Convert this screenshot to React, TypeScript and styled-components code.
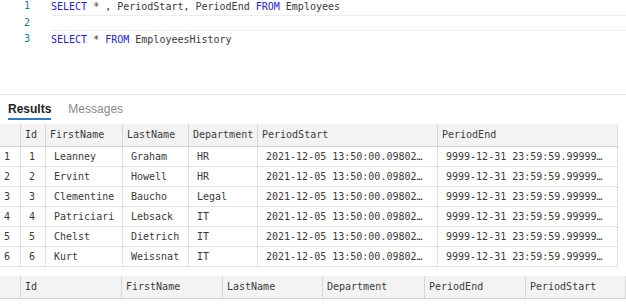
import React from 'react';
import styled, { createGlobalStyle } from 'styled-components';

const GlobalStyle = createGlobalStyle`
  html, body {
    margin: 0;
    padding: 0;
    background: #ffffff;
    overflow: hidden;
  }
`;

const mono = `"DejaVu Sans Mono", "Liberation Mono", monospace`;

type Row = [string, string, string, string, string, string];

const rows: Row[] = [
  ['1', 'Leanney', 'Graham', 'HR', '2021-12-05 13:50:00.09802…', '9999-12-31 23:59:59.99999…'],
  ['2', 'Ervint', 'Howell', 'HR', '2021-12-05 13:50:00.09802…', '9999-12-31 23:59:59.99999…'],
  ['3', 'Clementine', 'Baucho', 'Legal', '2021-12-05 13:50:00.09802…', '9999-12-31 23:59:59.99999…'],
  ['4', 'Patriciari', 'Lebsack', 'IT', '2021-12-05 13:50:00.09802…', '9999-12-31 23:59:59.99999…'],
  ['5', 'Chelst', 'Dietrich', 'IT', '2021-12-05 13:50:00.09802…', '9999-12-31 23:59:59.99999…'],
  ['6', 'Kurt', 'Weissnat', 'IT', '2021-12-05 13:50:00.09802…', '9999-12-31 23:59:59.99999…'],
];

const firstCols = '21px 25px 77px 66px 69px 180px 180px';
const secondCols = '21px 101px 101px 100px 102px 101px 1fr';

export default function App() {
  return (
    <Page>
      <GlobalStyle />
      <Editor>
        <Line>
          <LineNo>1</LineNo>
          <Code>
            <Kw>SELECT</Kw> * , PeriodStart, PeriodEnd <Kw>FROM</Kw> Employees
          </Code>
        </Line>
        <Line>
          <LineNo>2</LineNo>
          <Code current />
        </Line>
        <Line>
          <LineNo>3</LineNo>
          <Code>
            <Kw>SELECT</Kw> * <Kw>FROM</Kw> EmployeesHistory
          </Code>
        </Line>
      </Editor>

      <Tabs>
        <Tab active>Results</Tab>
        <Tab>Messages</Tab>
      </Tabs>

      <Grid width="618px">
        <HeadRow cols={firstCols}>
          <HeadCell />
          <HeadCell>Id</HeadCell>
          <HeadCell>FirstName</HeadCell>
          <HeadCell>LastName</HeadCell>
          <HeadCell>Department</HeadCell>
          <HeadCell>PeriodStart</HeadCell>
          <HeadCell>PeriodEnd</HeadCell>
        </HeadRow>
        {rows.map((r, i) => (
          <DataRow cols={firstCols} key={r[0]}>
            <NumCell>{i + 1}</NumCell>
            {r.map((v, j) => (
              <Cell key={j}>{v}</Cell>
            ))}
          </DataRow>
        ))}
      </Grid>

      <Grid width="100%" second>
        <HeadRow cols={secondCols}>
          <HeadCell />
          <HeadCell>Id</HeadCell>
          <HeadCell>FirstName</HeadCell>
          <HeadCell>LastName</HeadCell>
          <HeadCell>Department</HeadCell>
          <HeadCell>PeriodEnd</HeadCell>
          <HeadCell>PeriodStart</HeadCell>
        </HeadRow>
      </Grid>
    </Page>
  );
}

const Page = styled.div`
  width: 626px;
  height: 304px;
  overflow: hidden;
  background: #ffffff;
`;

// editor area, ends with the thin separator at y=95
const Editor = styled.div`
  height: 97px;
  margin-top: -2px;
  border-bottom: 1px solid #e4e4e4;
  box-sizing: border-box;
`;

const Line = styled.div`
  display: flex;
  height: 16.5px;
  line-height: 16.5px;
  font-family: ${mono};
  font-size: 10px;
`;

const LineNo = styled.div`
  width: 30px;
  text-align: right;
  color: #237893;
  flex-shrink: 0;
`;

const Code = styled.div<{ current?: boolean }>`
  flex: 1;
  margin-left: 21px;
  color: #3a3a3a;
  white-space: pre;
  box-sizing: border-box;
  border-top: 1px solid ${(p) => (p.current ? '#eeeeee' : 'transparent')};
  border-bottom: 1px solid ${(p) => (p.current ? '#eeeeee' : 'transparent')};
`;

const Kw = styled.span`
  color: #2626d0;
`;

const Tabs = styled.div`
  display: flex;
  gap: 17px;
  padding: 5px 8px 0;
  height: 29px;
  box-sizing: border-box;
`;

const Tab = styled.div<{ active?: boolean }>`
  font-family: "Liberation Sans", Arial, sans-serif;
  font-size: 12px;
  line-height: 18px;
  height: 18px;
  color: ${(p) => (p.active ? '#222222' : '#8a8a8a')};
  font-weight: ${(p) => (p.active ? 600 : 400)};
  border-bottom: 2px solid ${(p) => (p.active ? '#2f7bc4' : 'transparent')};
`;

const Grid = styled.div<{ width: string; second?: boolean }>`
  width: ${(p) => p.width};
  margin-top: ${(p) => (p.second ? '9px' : '0')};
  font-family: ${mono};
  font-size: 10px;
  color: #3a3a3a;
`;

const HeadRow = styled.div<{ cols: string }>`
  display: grid;
  grid-template-columns: ${(p) => p.cols};
  height: 23px;
  background: #f3f3f3;
  border-bottom: 1px solid #cfcfcf;
  border-right: 1px solid #dddddd;
  box-sizing: border-box;
`;

const HeadCell = styled.div`
  padding-left: 4px;
  line-height: 22px;
  white-space: nowrap;
  overflow: hidden;
  border-right: 1px solid #d6d6d6;
  &:last-child {
    border-right: none;
  }
`;

const DataRow = styled.div<{ cols: string }>`
  display: grid;
  grid-template-columns: ${(p) => p.cols};
  height: 20px;
  border-bottom: 1px solid #e2e2e2;
  border-right: 1px dotted #cccccc;
  box-sizing: border-box;
  &:first-of-type {
    margin-top: 4px;
  }
`;

const Cell = styled.div`
  padding-left: 8px;
  line-height: 19px;
  white-space: nowrap;
  overflow: hidden;
  border-right: 1px dotted #c8c8c8;
  &:last-child {
    border-right: none;
  }
`;

const NumCell = styled(Cell)`
  padding-left: 4px;
`;
